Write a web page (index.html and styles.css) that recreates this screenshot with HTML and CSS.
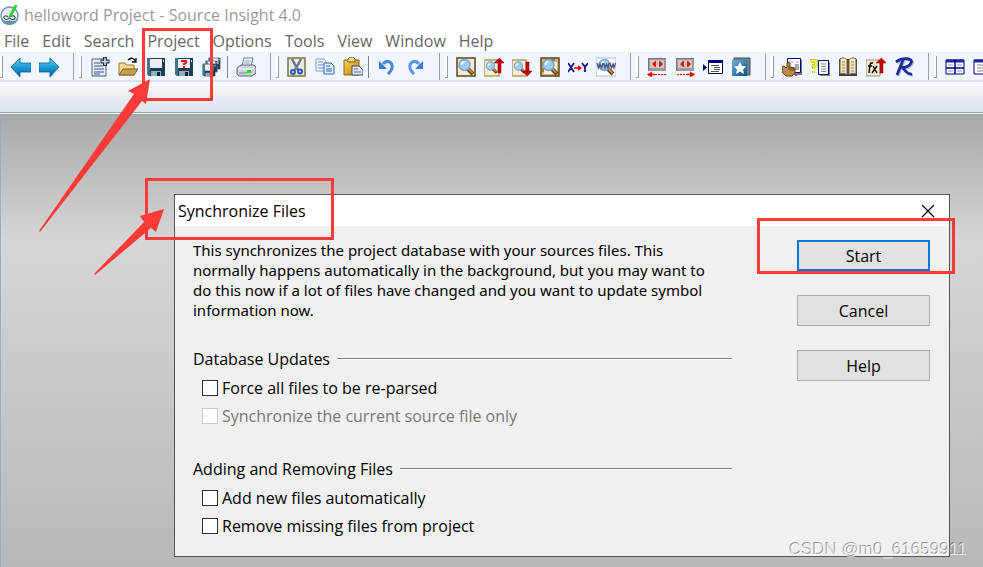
FILE: index.html
```
<!DOCTYPE html>
<html lang="en">
<head>
    <meta charset="UTF-8">
    <meta name="viewport" content="width=device-width, initial-scale=1.0">
    <title>helloword Project - Source Insight 4.0</title>
    <link rel="stylesheet" href="styles.css">
</head>
<body>
    <!-- shared icon parts -->
    <svg class="defs" aria-hidden="true">
        <linearGradient id="blue" x1="0" y1="0" x2="0" y2="1">
            <stop offset="0" stop-color="#5fd0f5"/><stop offset="0.5" stop-color="#1c9ad6"/><stop offset="1" stop-color="#0a5f9c"/>
        </linearGradient>
        <linearGradient id="gold" x1="0" y1="0" x2="1" y2="1">
            <stop offset="0" stop-color="#ffd95a"/><stop offset="1" stop-color="#b07c08"/>
        </linearGradient>
        <linearGradient id="star" x1="0" y1="0" x2="1" y2="1">
            <stop offset="0" stop-color="#6fb2d8"/><stop offset="1" stop-color="#0b4f80"/>
        </linearGradient>
        <symbol id="lens" viewBox="0 0 20 20">
            <path d="M12 12l5 5" stroke="#5a3a10" stroke-width="4"/>
            <path d="M12.500 12l4 4" stroke="#c88a3c" stroke-width="2"/>
            <circle cx="8.500" cy="8" r="5.500" fill="#9fcdf0" stroke="#7fa3d6" stroke-width="1.500"/>
            <path d="M5.500 8a3 3 0 0 1 3-3" fill="none" stroke="#e4f6ff" stroke-width="2"/>
        </symbol>
        <symbol id="disk" viewBox="0 0 20 20">
            <path d="M1 1h18v18H3l-2-2z" fill="#1d3d52"/>
            <path d="M1 1h3v18l-3-2z" fill="#44718c"/>
            <path d="M4 2h12v9H4z" fill="#e9f0f2"/>
            <path d="M5 14h10v5H5z" fill="#8fb0c0"/>
            <path d="M11 15h3v4h-3z" fill="#12283a"/>
            <path d="M17 3h1v2h-1z" fill="#c5dbe5"/>
        </symbol>
        <symbol id="shift" viewBox="0 0 20 20">
            <path d="M1 1h18v13H1z" fill="#9a9a9a"/>
            <path d="M1 1h18v1H2v12H1z" fill="#777"/>
            <path d="M3 3h14v8H3z" fill="#c8c8c8"/>
            <path d="M9 4v6H8L5 7l3-3zM12 4v6h1l3-3-3-3z" fill="#f00"/>
        </symbol>
    </svg>

    <header class="titlebar">
        <svg class="logo" viewBox="0 0 20 20">
            <circle cx="9.500" cy="10.500" r="8.500" fill="#e4edf3" stroke="#7893a6" stroke-width="1.500"/>
            <path d="M1 13a8.500 7 0 0 0 17 0z" fill="#6c93ad"/>
            <path d="M8 12c-2-2-5-1-4 1s4 2 5 0 5-3 6-1-3 4-5 1" fill="none" stroke="#fff" stroke-width="3"/>
            <path d="M8 12c-2-2-5-1-4 1s4 2 5 0 5-3 6-1-3 4-5 1" fill="none" stroke="#27506b" stroke-width="1.200"/>
            <path d="M9 13l1-4 5-9 2 1-5 9z" fill="#1be01b" stroke="#15a51c" stroke-width="0.500"/>
        </svg>
        <span>helloword Project - Source Insight 4.0</span>
    </header>

    <nav class="menubar">
        <a href="#">File</a>
        <a href="#">Edit</a>
        <a href="#">Search</a>
        <a href="#">Project</a>
        <a href="#">Options</a>
        <a href="#">Tools</a>
        <a href="#">View</a>
        <a href="#">Window</a>
        <a href="#">Help</a>
    </nav>

    <div class="toolbar">
        <div class="group first">
            <button type="button" class="tool" aria-label="Back"><svg viewBox="0 0 20 20"><path d="M0 10L9 1v5h11v9H9v5z" fill="url(#blue)" stroke="#0c5d94" stroke-width="0.800"/></svg></button>
            <button type="button" class="tool" aria-label="Forward"><svg viewBox="0 0 20 20"><path d="M20 10L11 1v5H0v9h11v5z" fill="url(#blue)" stroke="#0c5d94" stroke-width="0.800"/></svg></button>
        </div>
        <div class="group">
            <button type="button" class="tool" aria-label="New"><svg viewBox="0 0 20 20"><path d="M2 2h14v17H2z" fill="#e8eefb" stroke="#4c5c86"/><path d="M4 6h6M4 9h9M4 12h10M4 15h10M4 17h6" stroke="#3d5080"/><path d="M15 0v9M10.500 4.500h9" stroke="#26344a" stroke-width="4"/><path d="M15 1v7M11.500 4.500h7" stroke="#cde6f2" stroke-width="1.500"/></svg></button>
            <button type="button" class="tool" aria-label="Open"><svg viewBox="0 0 20 20"><path d="M1 18V6h6l1 2h8v10z" fill="#f3d890" stroke="#a07b2c"/><path d="M1 18l4-6h15l-4 6z" fill="#c4a052" stroke="#7b5c1c"/><path d="M10 3c3-3 6-2 8 2M18 1v4h-4" fill="none" stroke="#111" stroke-width="1.300"/></svg></button>
            <button type="button" class="tool" aria-label="Save"><svg><use href="#disk"/></svg></button>
            <button type="button" class="tool" aria-label="Save as"><svg viewBox="0 0 20 20"><use href="#disk"/><path d="M8 5V4h4v2l-2 1v1M10 9v2" fill="none" stroke="#e8141c" stroke-width="2"/></svg></button>
            <button type="button" class="tool" aria-label="Save all"><svg viewBox="0 0 20 20"><use href="#disk" x="6" y="0" width="13" height="13"/><use href="#disk" x="3" y="3" width="13" height="13"/><use href="#disk" x="0" y="6" width="14" height="14"/></svg></button>
            <span class="divider"></span>
            <button type="button" class="tool" aria-label="Print"><svg viewBox="0 0 20 20"><path d="M6 9l2-8h9l-2 8z" fill="#fff" stroke="#66748c"/><path d="M9 4h6M8 6h6" stroke="#8797b5"/><path d="M1 11l4-3h13l2 2v6l-4 3H3l-2-2z" fill="#cdd3de" stroke="#5c6679"/><path d="M2 12h14l3-2" fill="none" stroke="#fff"/><path d="M3 16h8" stroke="#7c8798"/><path d="M11 13h4v3h-4z" fill="#12e412"/></svg></button>
        </div>
        <div class="group">
            <button type="button" class="tool" aria-label="Cut"><svg viewBox="0 0 20 20"><path d="M1 1h17v18H1z" fill="#e9e9e2" stroke="#77773c" stroke-width="1.500"/><path d="M5 2l6 11M14 2L8 13" stroke="#6c7786" stroke-width="2.500"/><circle cx="6" cy="15" r="2" fill="none" stroke="#2459bd" stroke-width="2"/><circle cx="13" cy="14.500" r="2" fill="none" stroke="#2459bd" stroke-width="2"/></svg></button>
            <button type="button" class="tool" aria-label="Copy"><svg viewBox="0 0 20 20"><path d="M1 2h8l2 2v10H1z" fill="#f4f8ff" stroke="#7c9cd0"/><path d="M3 5h5M3 8h6M3 11h6" stroke="#5a8bd8"/><path d="M9 6h7l3 3v8H9z" fill="#e2edff" stroke="#3e66a8"/><path d="M11 9h4M11 12h6M11 14h6" stroke="#2f6bd0"/></svg></button>
            <button type="button" class="tool" aria-label="Paste"><svg viewBox="0 0 20 20"><path d="M1 3h15v15H1z" fill="url(#gold)" stroke="#8c6512"/><path d="M5 2l2-2h3l2 2v3H5z" fill="#e8dc8c" stroke="#77682c"/><path d="M9 9h7l4 4v5H9z" fill="#dfe6f0" stroke="#3e4b62"/><path d="M11 12h4M11 15h7" stroke="#5d6b82"/></svg></button>
            <span class="divider"></span>
            <button type="button" class="tool" aria-label="Undo"><svg viewBox="0 0 20 20"><path d="M6 7c4-5 10-2 9 4-.5 3-2 4-4 6" fill="none" stroke="#4b84dc" stroke-width="3"/><path d="M2 4v8h8z" fill="#3c76d2"/></svg></button>
            <button type="button" class="tool" aria-label="Redo"><svg viewBox="0 0 20 20"><path d="M14 7C10 2 4 5 5 11c.5 3 2 4 4 6" fill="none" stroke="#5b94e6" stroke-width="3"/><path d="M18 4v8h-8z" fill="#3c76d2"/></svg></button>
        </div>
        <div class="group">
            <button type="button" class="tool" aria-label="Find"><svg viewBox="0 0 20 20"><path d="M1 1h18v18H1z" fill="#f3ecd2" stroke="#5b4713" stroke-width="1.500"/><use href="#lens"/></svg></button>
            <button type="button" class="tool" aria-label="Find previous"><svg viewBox="0 0 20 20"><path d="M0 3h15v16H0z" fill="#f3ecd2" stroke="#b39c60" stroke-width="1.500"/><use href="#lens" x="0" y="3" width="15" height="15"/><path d="M14 16V6h-4l5.500-5L20 6h-3v10z" fill="#c80000" stroke="#700" stroke-width="0.500"/></svg></button>
            <button type="button" class="tool" aria-label="Find next"><svg viewBox="0 0 20 20"><path d="M0 3h14v16H0z" fill="#f3ecd2" stroke="#b39c60" stroke-width="1.500"/><use href="#lens" x="0" y="3" width="15" height="15"/><path d="M14 5v9h-4l5.500 5 4.500-5h-3V5z" fill="#c80000" stroke="#700" stroke-width="0.500"/></svg></button>
            <button type="button" class="tool" aria-label="Find in files"><svg viewBox="0 0 20 20"><path d="M1 1h18v18H1z" fill="#cdb878" stroke="#5b4713" stroke-width="1.500"/><path d="M4 5h13v12H4z" fill="#f6f1dc"/><path d="M5 3h12M3 5v12" stroke="#5b4713" stroke-dasharray="4 2"/><use href="#lens"/></svg></button>
            <button type="button" class="tool" aria-label="Replace"><svg viewBox="0 0 20 20"><path d="M0 6l6 9M6 6l-6 9M14 6l3 4 3-4M17 10v5" fill="none" stroke="#14148c" stroke-width="1.800"/><path d="M6 11h6" stroke="#f00" stroke-width="1.500"/><path d="M10 8l4 3-4 3z" fill="#f00"/></svg></button>
            <button type="button" class="tool" aria-label="Search web"><svg viewBox="0 0 20 20"><path d="M0 1h20v18H0z" fill="#fff" stroke="#a9bcdc"/><use href="#lens"/><path d="M1 6l1.500 5L4 7l1.500 4L7 6M7.500 6L9 11l1.500-4L12 11l1-5M14 6l1.500 5L17 7l1 4 1.500-5" fill="none" stroke="#444c78" stroke-width="1.200"/></svg></button>
        </div>
        <div class="group">
            <button type="button" class="tool" aria-label="Shift left"><svg viewBox="0 0 20 20"><use href="#shift"/><path d="M1 17.500h7" stroke="#f00" stroke-width="1.500"/><path d="M8 17.500h11" stroke="#f00" stroke-dasharray="2 1"/><path d="M5 14.500v6l-5-3z" fill="#f00"/></svg></button>
            <button type="button" class="tool" aria-label="Shift right"><svg viewBox="0 0 20 20"><use href="#shift"/><path d="M12 17.500h7" stroke="#f00" stroke-width="1.500"/><path d="M2 17.500h11" stroke="#f00" stroke-dasharray="2 1"/><path d="M15 14.500v6l5-3z" fill="#f00"/></svg></button>
            <button type="button" class="tool" aria-label="Go to line"><svg viewBox="0 0 20 20"><path d="M5.500 3.500h14v13h-14z" fill="#fff" stroke="#111"/><path d="M5 3h15v3H5z" fill="#000080"/><path d="M8 8.500h8M11 10.500h6M11 12.500h6M8 14.500h8" stroke="#555"/><path d="M0 7v7l4-3.500z" fill="#000080"/></svg></button>
            <button type="button" class="tool" aria-label="Bookmarks"><svg viewBox="0 0 20 20"><path d="M3 1h16v17H3z" fill="#70808c" stroke="#45525c"/><path d="M1 3h15v16H1z" fill="url(#star)"/><path d="M9 5l2 4 4 .5-3 3 1 4.500-4-2.500L5 17l1-4.500-3-3L7 9z" fill="#fff"/></svg></button>
        </div>
        <div class="group">
            <button type="button" class="tool" aria-label="Browse symbol"><svg viewBox="0 0 20 20"><path d="M7 3h13v15H7z" fill="#777"/><path d="M5.500 1.500h13v14h-13z" fill="#fff" stroke="#000080"/><path d="M8 5h4M14 5h3M12 8h5" stroke="#aaa"/><path d="M13 7h4v6h-4z" fill="#aaa"/><path d="M0 10l2-1 2 2 1-1V6l2-1 1 1v4l5 1v5l-3 3H4l-4-4z" fill="#c08a48" stroke="#5f3d12"/><path d="M7 9v4M9 10v4M11 11v3" stroke="#5f3d12"/><path d="M13 17h2v2h-2z" fill="#f0f"/></svg></button>
            <button type="button" class="tool" aria-label="Symbol info"><svg viewBox="0 0 20 20"><path d="M10 5h10v14H10z" fill="#888"/><path d="M8.500 3.500h10v14h-10z" fill="#fff" stroke="#000080"/><path d="M11 7h5M11 9.500h5M11 12h5M11 14.500h5" stroke="#888"/><path d="M1 6V4h5v4L3.500 9v3M3.500 14v2" fill="none" stroke="#8a8a30" stroke-width="3"/><path d="M1 6V4h5v4L3.500 9v3M3.500 14v2" fill="none" stroke="#ff0" stroke-width="2"/></svg></button>
            <button type="button" class="tool" aria-label="Reference book"><svg viewBox="0 0 20 20"><path d="M1 2h18v17H1z" fill="#3c3560"/><path d="M2 2c3-2 6-1 7 1v15c-2-2-5-2-7-1zM18 2c-3-2-6-1-7 1v15c2-2 5-2 7-1z" fill="#f1e6bf" stroke="#796837"/><path d="M4 5h3M4 8h3M4 11h3M4 14h3M13 5h3M13 8h3M13 11h3M13 14h3" stroke="#998857"/></svg></button>
            <button type="button" class="tool" aria-label="Function up"><svg viewBox="0 0 20 20"><path d="M0 3h14v16H0z" fill="#f0ead2" stroke="#a3946c"/><path d="M7 6c-4-1-3 4-4 10M2 9h4M7 9l4 7M11 9l-5 7" fill="none" stroke="#111" stroke-width="1.500"/><path d="M14 16V6h-4l5.500-5L20 6h-3v10z" fill="#c80000" stroke="#700" stroke-width="0.500"/></svg></button>
            <button type="button" class="tool" aria-label="Relations"><svg viewBox="0 0 20 20"><path d="M2 5C8 0 20 1 17 6c-1 3-6 5-9 4 3 3 5 8 10 7M9 3L3 18" fill="none" stroke="#b9bfd4" stroke-width="3" transform="translate(1 1)"/><path d="M2 5C8 0 20 1 17 6c-1 3-6 5-9 4 3 3 5 8 10 7M9 3L3 18" fill="none" stroke="#1c2a9c" stroke-width="2.800"/></svg></button>
        </div>
        <div class="group">
            <button type="button" class="tool" aria-label="Tile windows"><svg viewBox="0 0 20 20"><path d="M1 3h18v14H1z" fill="#fff" stroke="#000080"/><path d="M1 2.500h18v3H1z" fill="#25259c"/><path d="M10 3v14M1 11h18" stroke="#000080" stroke-width="1.500"/><path d="M3 8h5M12 8h5M3 14h5M12 14h5" stroke="#999"/></svg></button>
            <button type="button" class="tool" aria-label="Cascade windows"><svg viewBox="0 0 20 20"><path d="M1 3h18v14H1z" fill="#fff" stroke="#000080"/><path d="M1 2.500h18v3H1z" fill="#25259c"/><path d="M4 8h12M4 11h12M4 14h12" stroke="#888"/></svg></button>
        </div>
    </div>
    <div class="subbar"></div>

    <main class="workspace">
        <section class="dialog" role="dialog" aria-labelledby="dialogTitle">
            <div class="dialog-title">
                <span id="dialogTitle">Synchronize Files</span>
                <button type="button" class="close" aria-label="Close"><svg viewBox="0 0 14 14"><path d="M1 1l12 12M13 1L1 13" stroke="#000" stroke-width="1.200"/></svg></button>
            </div>
            <form class="dialog-body" action="#">
                <div class="settings">
                    <p class="intro">This synchronizes the project database with your sources files. This<br>normally happens automatically in the background, but you may want to<br>do this now if a lot of files have changed and you want to update symbol<br>information now.</p>
                    <fieldset>
                        <legend>Database Updates</legend>
                        <label class="check"><input type="checkbox">Force all files to be re-parsed</label>
                        <label class="check disabled"><input type="checkbox" disabled>Synchronize the current source file only</label>
                    </fieldset>
                    <fieldset>
                        <legend>Adding and Removing Files</legend>
                        <label class="check"><input type="checkbox">Add new files automatically</label>
                        <label class="check"><input type="checkbox">Remove missing files from project</label>
                    </fieldset>
                </div>
                <div class="actions">
                    <button type="button" class="button default">Start</button>
                    <button type="button" class="button">Cancel</button>
                    <button type="button" class="button">Help</button>
                </div>
            </form>
        </section>
    </main>

    <!-- red marks drawn over the window -->
    <svg class="marks" width="983" height="567" viewBox="0 0 983 567" aria-hidden="true">
        <g fill="none" stroke="#fc3a38" stroke-width="3">
            <path d="M143.500 29.500h68v70h-68z"/>
            <path d="M146.500 179.500h186v59h-186z"/>
            <path d="M758.500 219.500h195v53h-195z"/>
        </g>
        <g fill="#fc3a38">
            <path d="M39 231L134 94l-6-3 22-12-4 25-4-3L40 232z"/>
            <path d="M94 274L144 222l-4-6 24-7-8 23-5-4L95 275z"/>
        </g>
    </svg>
    <div class="watermark">CSDN @m0_61659911</div>
</body>
</html>
```
FILE: styles.css
```
* {
    box-sizing: border-box;
}
body {
    margin: 0;
    min-height: 100vh;
    display: flex;
    flex-direction: column;
    position: relative;
    overflow: hidden;
    background-color: #fff;
    color: #000;
    font-family: "Open Sans", "Noto Sans", sans-serif;
    font-size: 16px;
    line-height: 20px;
}
button, input {
    font: inherit;
    color: inherit;
}
.defs {
    position: absolute;
    width: 0;
    height: 0;
}
.titlebar {
    display: flex;
    align-items: center;
    gap: 4px;
    height: 29px;
    color: #999;
}
.logo {
    width: 20px;
    height: 20px;
}
.menubar {
    display: flex;
    align-items: center;
    gap: 13px;
    height: 24px;
    padding-left: 4px;
    border-bottom: 1px solid #f0f0f0;
}
.menubar a {
    color: #666;
    text-decoration: none;
}

/* toolbar */
.toolbar {
    display: flex;
    height: 29px;
    overflow: hidden;
    background-color: #f1f5fe;
    border-bottom: 2px solid #dce3ec;
}
.group {
    display: flex;
    flex-shrink: 0;
    align-items: center;
    padding-right: 10px;
    border-right: 1px solid #a0a0a0;
}
.group::before {
    content: "";
    width: 2px;
    height: 21px;
    margin: 0 4px 0 5px;
    border: 1px solid #a0a0a0;
    border-width: 0 1px 1px 0;
    background-color: #fff;
}
.group.first::before {
    margin-left: 0;
}
.group:last-child {
    border-right: none;
}
.tool {
    display: flex;
    justify-content: center;
    align-items: center;
    width: 28px;
    height: 26px;
    padding: 0;
    border: none;
    background: none;
}
.tool svg {
    width: 20px;
    height: 20px;
}
.divider {
    width: 1px;
    height: 22px;
    margin: 0 4px 0 1px;
    background-color: #808080;
}
.subbar {
    height: 33px;
    background: linear-gradient(#f8fafe, #dbe2ea);
    border-bottom: 3px double #9ba3ad;
}

/* dialog */
.workspace {
    flex: 1;
    padding: 79px 33px 10px 173px;
    border-left: 1px solid #9fa9b8;
    background: linear-gradient(#a9a9a9, #d6d6d6 28%, #b8b8b8);
}
.dialog {
    border: 1px solid #555;
    background-color: #f0f0f0;
}
.dialog-title {
    display: flex;
    justify-content: space-between;
    align-items: center;
    height: 31px;
    padding: 0 14px 0 3px;
    background-color: #fff;
}
.close {
    display: flex;
    padding: 0;
    border: none;
    background: none;
}
.close svg {
    width: 14px;
    height: 14px;
}
.dialog-body {
    display: flex;
    gap: 65px;
    padding: 14px 19px 16px 18px;
}
.settings {
    flex: 1;
}
.intro {
    margin: 0;
    font-family: "Noto Sans", "Open Sans", sans-serif;
    font-size: 15px;
}
fieldset {
    margin: 29px 0 0;
    padding: 0;
    border: none;
}
legend {
    display: flex;
    align-items: center;
    gap: 7px;
    width: 100%;
    margin-bottom: 5px;
    padding: 0;
}
legend::after {
    content: "";
    flex: 1;
    height: 1px;
    background-color: #fff;
    border-top: 1px solid #808080;
}
.check {
    display: flex;
    align-items: center;
    gap: 4px;
    height: 28px;
    padding-left: 9px;
}
.check input {
    appearance: none;
    width: 16px;
    height: 16px;
    margin: 0;
    border: 1px solid #333;
    background-color: #fff;
}
.check.disabled {
    color: #787878;
}
.check.disabled input {
    border-color: #ccc;
}
.actions {
    display: flex;
    flex-direction: column;
    gap: 24px;
    width: 133px;
}
.button {
    height: 31px;
    padding: 0;
    border: 1px solid #adadad;
    background-color: #e1e1e1;
}
.button.default {
    border: 2px solid #0078d7;
}

.marks {
    position: absolute;
    top: 0;
    left: 0;
    pointer-events: none;
}
.watermark {
    position: absolute;
    right: 16px;
    bottom: 7px;
    color: rgba(255, 255, 255, 0.7);
    font-family: "Liberation Sans", Arial, sans-serif;
    font-size: 17px;
    text-shadow: -1px -1px 0 rgba(90, 90, 90, 0.6);
}
```
